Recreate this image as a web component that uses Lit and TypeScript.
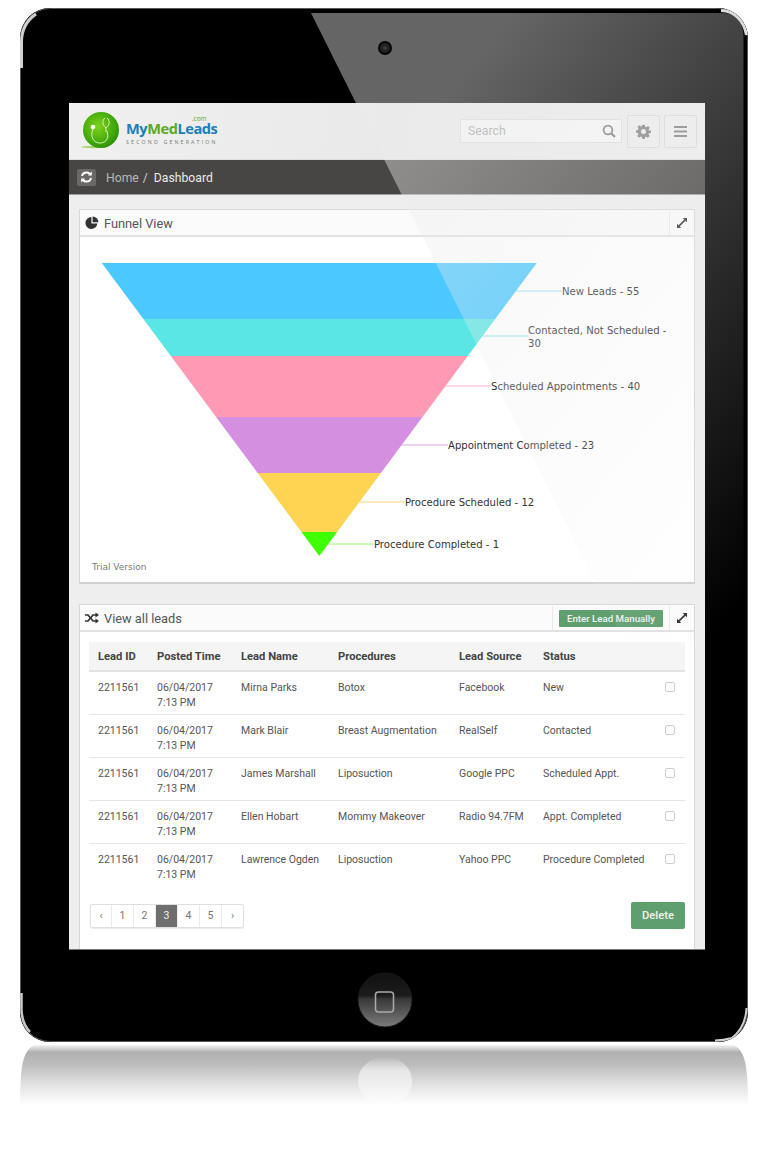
import { LitElement, html, css, svg } from "lit";
import { customElement } from "lit/decorators.js";

const LEADS = [
  ["Mirna Parks", "Botox", "Facebook", "New"],
  ["Mark Blair", "Breast Augmentation", "RealSelf", "Contacted"],
  ["James Marshall", "Liposuction", "Google PPC", "Scheduled Appt."],
  ["Ellen Hobart", "Mommy Makeover", "Radio 94.7FM", "Appt. Completed"],
  ["Lawrence Ogden", "Liposuction", "Yahoo PPC", "Procedure Completed"],
];

// apex-relative funnel: x half width grows linearly with depth
const CX = 239.3, TOP = 26, APEX = 319, HALF = 217.5;
const hw = (y: number) => (HALF * (APEX - y)) / (APEX - TOP);
const BANDS = [
  { y0: 26, y1: 82, c: "#4ac8ff", line: 54, x2: 482, lbl: ["New Leads - 55"], lc: "#8fdcff" },
  { y0: 82, y1: 119, c: "#5ae6e4", line: 99, x2: 448, lbl: ["Contacted, Not Scheduled -", "30"], lc: "#8fdcf0" },
  { y0: 119, y1: 180, c: "#ff99b4", line: 149, x2: 411, lbl: ["Scheduled Appointments - 40"], lc: "#ffb0c6" },
  { y0: 180, y1: 236, c: "#d58fe0", line: 208, x2: 368, lbl: ["Appointment Completed - 23"], lc: "#dca6e6" },
  { y0: 236, y1: 295, c: "#ffd452", line: 265, x2: 325, lbl: ["Procedure Scheduled - 12"], lc: "#ffd878" },
  { y0: 295, y1: 319, c: "#40ff00", line: 307, x2: 294, lbl: ["Procedure Completed - 1"], lc: "#90ff70" },
];

@customElement("app-root")
export class AppRoot extends LitElement {
  static styles = css`
    :host { display: block; background: #fff; font-family: Roboto, "Liberation Sans", sans-serif; }
    .stage { position: relative; width: 768px; height: 1174px; padding: 8px 20px 0; box-sizing: border-box; overflow: hidden; }
    .device {
      position: relative; height: 1034px; box-sizing: border-box; padding: 95px 43px 0 49px;
      background: #000; border-radius: 30px; overflow: hidden;
    }
    .screen {
      position: relative; width: 636px; height: 847px; background: #eeeeee; overflow: hidden; display: flex; flex-direction: column;
      border-bottom: 1px solid #777; box-sizing: border-box;
    }
    .topbar {
      height: 57px; flex: none; box-sizing: border-box; display: flex; align-items: center; padding: 0 8px 0 12px;
      background: linear-gradient(100deg, #eff0ef, #e8e9e8 50%, #eeeeee); border-bottom: 1px solid #dedede;
    }
    .logo { display: flex; align-items: center; width: 140px; }
    .logo svg { flex: none; }
    .wordmark { position: relative; margin-left: 7px; margin-top: 5px; }
    .wm-main { font: 700 14.6px/14px "Open Sans", sans-serif; letter-spacing: -0.45px; color: #1d7fb9; white-space: nowrap; }
    .wm-main b { color: #5fa821; font-weight: 700; }
    .wm-com { position: absolute; right: 11px; bottom: 100%; margin-bottom: -1px; font: 400 6.5px/6px "Open Sans", sans-serif; color: #62a82a; }
    .wm-sub { font: 400 5.2px/7px "Open Sans", sans-serif; letter-spacing: 2.2px; color: #777; white-space: nowrap; margin-top: 4px; }
    .spacer { flex: 1; }
    .search {
      width: 162px; height: 24px; box-sizing: border-box; border: 1px solid #dcdcdc; background: #f7f7f7;
      display: flex; align-items: center; justify-content: space-between; padding: 0 5px 0 7px;
      font-size: 12.3px; color: #a4a4a4; margin-right: 1px;
    }
    .iconbtn {
      width: 33px; height: 33px; box-sizing: border-box; border: 1px solid #d9d9d9; border-radius: 2px; background: #eeeeee;
      display: flex; align-items: center; justify-content: center; margin-left: 4px; color: #808080;
    }
    .crumbs {
      height: 35px; flex: none; box-sizing: border-box; background: #484644; border-bottom: 1px solid #9c9c9c; display: flex; align-items: center;
      padding: 0 0 0 8px; font-size: 12.2px; color: #fff;
    }
    .refresh { width: 19px; height: 17px; border-radius: 2px; background: #6a6967; display: flex; align-items: center; justify-content: center; margin-right: 10px; }
    .home { color: #b9b9b9; margin: 2px 4px 0 0; }
    .sep { color: #d0d0d0; margin: 2px 6px 0 0; }
    .current { color: #e9e9e9; margin-top: 2px; }
    .main { padding: 14px 10px 0; display: flex; flex-direction: column; gap: 20px; }
    .panel { background: #fff; border: 1px solid #d8d8d8; border-bottom: 2px solid #d0d0d0; flex: none; }
    .phead {
      height: 24px; padding-top: 1px; display: flex; align-items: center; border-bottom: 2px solid #e2e2e2; background: #fbfbfb;
      font-size: 12.8px; color: #555;
    }
    .phead .ttl { display: flex; align-items: center; gap: 5px; padding-left: 5px; flex: 1; }
    .phead .cell { height: 100%; display: flex; align-items: center; justify-content: center; border-left: 1px solid #e8e8e8; width: 24px; }
    .phead .btncell { width: 117px; box-sizing: border-box; padding-right: 6px; border-left: 1px solid #e8e8e8; height: 100%; display: flex; align-items: center; justify-content: flex-end; }
    .enter { width: 104px; height: 17px; border-radius: 1px; background: #5f9f6e; color: #f2f2f2; font-size: 9.7px; font-weight: 500; display: flex; align-items: center; justify-content: center; }
    .chart { display: block; }
    .leads-body { padding: 10px 9px 0; height: 330px; box-sizing: border-box; }
    table { width: 596px; border-collapse: collapse; table-layout: fixed; font-size: 10.5px; color: #555; }
    th { height: 28px; background: #f5f5f5; border-bottom: 2px solid #e2e2e2; font-weight: 700; color: #444; text-align: left; padding: 0 0 0 9px; font-size: 11.2px; }
    td { vertical-align: top; padding: 9px 0 4px 9px; line-height: 14.5px; border-bottom: 1px solid #e6e6e6; }
    tr:last-child td { border-bottom: none; }
    .chk { display: block; width: 8px; height: 8px; border: 1px solid #cfcfcf; border-radius: 2px; margin: 1px 0 0 2px; background: #fff; }
    .foot { display: flex; justify-content: space-between; align-items: center; padding: 16px 0 0 1px; }
    .pager { display: flex; height: 22px; border: 1px solid #e0e0e0; border-radius: 2px; box-shadow: 0 1px 1px #ececec; }
    .pager span { width: 21px; display: flex; align-items: center; justify-content: center; font-size: 10.5px; color: #777; border-left: 1px solid #eaeaea; }
    .pager span:first-child { border-left: none; width: 20px; }
    .pager .active { background: #6e6e6e; color: #eee; }
    .delete { width: 54px; height: 27px; border-radius: 2px; background: #5f9f6e; color: #f2f2f2; font-size: 11.2px; font-weight: 500; display: flex; align-items: center; justify-content: center; }
    .device-art { position: absolute; inset: 0; width: 100%; height: 100%; pointer-events: none; }
    .reflection { position: absolute; left: 20px; top: 1043px; width: 728px; height: 62px; pointer-events: none; }
    .chart-label { font: 11.2px "DejaVu Sans Condensed", "DejaVu Sans", Verdana, sans-serif; fill: #333; }
    .trial { font: 9px "DejaVu Sans", Verdana, sans-serif; fill: #7a7a7a; }
  `;

  private funnel() {
    return html`<svg class="chart" width="614" height="345" viewBox="0 0 614 345">
      ${BANDS.map((b) => {
        const p = `${CX - hw(b.y0)},${b.y0} ${CX + hw(b.y0)},${b.y0} ${CX + hw(b.y1)},${b.y1} ${CX - hw(b.y1)},${b.y1}`;
        const x1 = CX + hw(b.line);
        return svg`
          <polygon points=${p} fill=${b.c}></polygon>
          <line x1=${x1} x2=${b.x2} y1=${b.line} y2=${b.line} stroke=${b.lc} stroke-width="1.2"></line>
          ${b.lbl.length === 1
            ? svg`<text class="chart-label" x=${b.x2} y=${b.line + 4}>${b.lbl[0]}</text>`
            : svg`<text class="chart-label" x=${b.x2} y=${b.line - 2}>${b.lbl[0]}</text>
                  <text class="chart-label" x=${b.x2} y=${b.line + 11}>${b.lbl[1]}</text>`}
        `;
      })}
      <text class="trial" x="12" y="333">Trial Version</text>
    </svg>`;
  }

  private expand() {
    return html`<svg width="10" height="10" viewBox="0 0 10 10" fill="#333">
      <path d="M5.8 0H10V4.2L8.5 2.7L2.7 8.5L4.2 10H0V5.8L1.5 7.3L7.3 1.5Z"></path>
    </svg>`;
  }

  render() {
    return html`
      <div class="stage">
        <div class="device">
          <div class="screen">
            <div class="topbar">
              <div class="logo">
                <svg width="38" height="38" viewBox="0 0 38 38">
                  <defs>
                    <radialGradient id="lg" cx="0.42" cy="0.4" r="0.65">
                      <stop offset="0" stop-color="#7fd31c"></stop>
                      <stop offset="0.7" stop-color="#40a80c"></stop>
                      <stop offset="1" stop-color="#2c8a08"></stop>
                    </radialGradient>
                  </defs>
                  <ellipse cx="13" cy="35" rx="13" ry="1.2" fill="#a6d56a"></ellipse>
                  <circle cx="20" cy="18" r="18" fill="url(#lg)"></circle>
                  <circle cx="12" cy="15" r="2.3" fill="#fff"></circle>
                  <path d="M12 17C9 24 12 31 19 31C26 31 28 25 26 19M24 6C21 8 21 13 25 16C29 13 29 8 26 6M25 16V20" fill="none" stroke="#e8f7d2" stroke-width="0.9"></path>
                </svg>
                <div class="wordmark">
                  <div class="wm-com">.com</div>
                  <div class="wm-main">My<b>Med</b>Leads</div>
                  <div class="wm-sub">SECOND GENERATION</div>
                </div>
              </div>
              <div class="spacer"></div>
              <div class="search">
                <span>Search</span>
                <svg width="14" height="14" viewBox="0 0 14 14" fill="none" stroke="#777" stroke-width="1.8">
                  <circle cx="6" cy="6" r="4.4"></circle><path d="M9.2 9.2L13 13" stroke-width="2.2"></path>
                </svg>
              </div>
              <div class="iconbtn">
                <svg width="15" height="15" viewBox="0 0 24 24" fill="#808080">
                  <path fill-rule="evenodd" d="M10 1h4l.6 3.2 1.9.8 2.7-1.8 2.8 2.8-1.8 2.7.8 1.9L24 10v4l-3.2.6-.8 1.9 1.8 2.7-2.8 2.8-2.7-1.8-1.9.8L14 24h-4l-.6-3.2-1.9-.8-2.7 1.8-2.8-2.8 1.8-2.7-.8-1.9L0 14v-4l3.2-.6.8-1.9L2.2 4.8 5 2l2.7 1.8 1.9-.8ZM12 8a4 4 0 1 0 0 8 4 4 0 0 0 0-8Z"></path>
                </svg>
              </div>
              <div class="iconbtn">
                <svg width="13" height="11" viewBox="0 0 13 11" fill="#808080">
                  <rect y="0" width="13" height="2"></rect><rect y="4.5" width="13" height="2"></rect><rect y="9" width="13" height="2"></rect>
                </svg>
              </div>
            </div>
            <div class="crumbs">
              <div class="refresh">
                <svg width="13" height="12" viewBox="0 0 13 12" fill="none" stroke="#fff" stroke-width="2">
                  <path d="M2 5C2.6 2.6 4.4 1.4 6.5 1.4C8 1.4 9.3 2 10.2 3.2"></path>
                  <path d="M11 7C10.4 9.4 8.6 10.6 6.5 10.6C5 10.6 3.7 10 2.8 8.8"></path>
                  <path d="M11.8 0.6V4.6H7.8Z" fill="#fff" stroke="none"></path>
                  <path d="M1.2 11.4V7.4H5.2Z" fill="#fff" stroke="none"></path>
                </svg>
              </div>
              <span class="home">Home</span><span class="sep">/</span><span class="current">Dashboard</span>
            </div>
            <div class="main">
              <section class="panel">
                <div class="phead">
                  <div class="ttl">
                    <svg width="14" height="14" viewBox="0 0 14 14" fill="#333">
                      <path d="M6.4 1A6 6 0 1 0 12.4 7.6H6.4Z"></path><path d="M7.6 0.4A6 6 0 0 1 13.4 6.2H7.6Z"></path>
                    </svg>
                    Funnel View
                  </div>
                  <div class="cell">${this.expand()}</div>
                </div>
                ${this.funnel()}
              </section>
              <section class="panel">
                <div class="phead">
                  <div class="ttl">
                    <svg width="14" height="12" viewBox="0 0 14 12" fill="none" stroke="#333" stroke-width="1.7">
                      <path d="M0 3H3L8 9H11"></path><path d="M0 9H3L8 3H11"></path>
                      <path d="M10.5 0.5L14 3L10.5 5.5Z" fill="#333" stroke="none"></path>
                      <path d="M10.5 6.5L14 9L10.5 11.5Z" fill="#333" stroke="none"></path>
                    </svg>
                    View all leads
                  </div>
                  <div class="btncell"><div class="enter">Enter Lead Manually</div></div>
                  <div class="cell">${this.expand()}</div>
                </div>
                <div class="leads-body">
                  <table>
                    <colgroup>
                      <col style="width:59px" /><col style="width:84px" /><col style="width:97px" /><col style="width:121px" /><col style="width:84px" /><col style="width:120px" /><col style="width:31px" />
                    </colgroup>
                    <thead>
                      <tr><th>Lead ID</th><th>Posted Time</th><th>Lead Name</th><th>Procedures</th><th>Lead Source</th><th>Status</th><th></th></tr>
                    </thead>
                    <tbody>
                      ${LEADS.map((r) => html`<tr>
                        <td>2211561</td><td>06/04/2017<br />7:13 PM</td>
                        <td>${r[0]}</td><td>${r[1]}</td><td>${r[2]}</td><td>${r[3]}</td>
                        <td><i class="chk"></i></td>
                      </tr>`)}
                    </tbody>
                  </table>
                  <div class="foot">
                    <div class="pager">
                      <span>‹</span><span>1</span><span>2</span><span class="active">3</span><span>4</span><span>5</span><span>›</span>
                    </div>
                    <div class="delete">Delete</div>
                  </div>
                </div>
              </section>
            </div>
          </div>
          <svg class="device-art" viewBox="0 0 728 1034">
            <defs>
              <linearGradient id="gl" gradientUnits="userSpaceOnUse" x1="335" y1="196" x2="762" y2="544">
                <stop offset="0" stop-color="#ececec" stop-opacity="0.43"></stop>
                <stop offset="1" stop-color="#ececec" stop-opacity="0"></stop>
              </linearGradient>
              <linearGradient id="hb" x1="0" y1="0" x2="0" y2="1">
                <stop offset="0" stop-color="#111"></stop>
                <stop offset="0.42" stop-color="#1c1c1c"></stop>
                <stop offset="0.48" stop-color="#383838"></stop>
                <stop offset="1" stop-color="#7c7c7c"></stop>
              </linearGradient>
            </defs>
            <path d="M291 5H703C716 5 723 14 723.500 28V640H608Z" fill="url(#gl)"></path>
            <circle cx="365" cy="40" r="6" fill="#222" stroke="#050505" stroke-width="2"></circle>
            <circle cx="365" cy="40" r="2" fill="#3a3a3a"></circle>
            <circle cx="365" cy="992" r="27" fill="url(#hb)" stroke="#1a1a1a"></circle>
            <rect x="355.500" y="984" width="18" height="20" rx="3" fill="none" stroke="#aaa" stroke-width="1.500"></rect>
            <rect x="0.500" y="0.500" width="727" height="1033" rx="30" fill="none" stroke="#5a5a5a" stroke-width="1"></rect>
            <path d="M1.500 60V34C1.500 22 6 13 16 6" fill="none" stroke="#cfcfcf" stroke-width="3"></path>
            <path d="M701 2.500C715 3 724 13 726.500 27" fill="none" stroke="#dcdcdc" stroke-width="3"></path>
            <path d="M1.500 985V1002C2 1012 5 1019 10 1024" fill="none" stroke="#c8c8c8" stroke-width="2.500"></path>
            <path d="M726.500 1000C726 1012 722 1022 712 1030C705 1032 700 1032.500 695 1032.500" fill="none" stroke="#d0d0d0" stroke-width="2"></path>
          </svg>
        </div>
        <svg class="reflection" viewBox="0 0 728 62">
          <defs>
            <linearGradient id="rf" x1="0" y1="0" x2="0" y2="1">
              <stop offset="0" stop-color="#f4f4f4"></stop>
              <stop offset="0.12" stop-color="#b0b0b0"></stop>
              <stop offset="0.32" stop-color="#bcbcbc"></stop>
              <stop offset="0.62" stop-color="#dedede"></stop>
              <stop offset="0.88" stop-color="#f5f5f5"></stop>
              <stop offset="1" stop-color="#ffffff"></stop>
            </linearGradient>
            <linearGradient id="rs" x1="0" y1="0" x2="0" y2="1">
              <stop offset="0" stop-color="#ffffff" stop-opacity="0"></stop>
              <stop offset="0.3" stop-color="#f2f2f2" stop-opacity="0.75"></stop>
              <stop offset="1" stop-color="#ffffff" stop-opacity="0.5"></stop>
            </linearGradient>
          </defs>
          <path d="M14 2H714C724 8 728 18 728 62H0C0 18 4 8 14 2Z" fill="url(#rf)"></path>
          <ellipse cx="365" cy="38" rx="27" ry="24" fill="url(#rs)"></ellipse>
        </svg>
      </div>
    `;
  }
}
